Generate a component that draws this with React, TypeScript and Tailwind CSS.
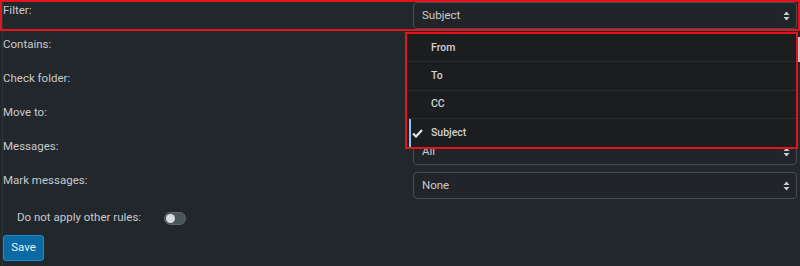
import React from "react"

function Updown() {
  return (
    <svg width="7" height="10" viewBox="0 0 7 10" className="text-[#c9ced1]">
      <path d="M3.5 0.5 L6.5 4 H0.5 Z" fill="currentColor" />
      <path d="M3.5 9.5 L6.5 6 H0.5 Z" fill="currentColor" />
    </svg>
  )
}

function Select({ value, hidden }: { value?: string; hidden?: boolean }) {
  return (
    <div className="w-[384px] h-[27px] rounded-[4px] border border-[#454d53] bg-[#212529] pl-[8px] pr-[6px] flex items-center justify-between text-[11.5px] text-[#c9ced1]">
      <span>{value}</span>
      {!hidden && <Updown />}
    </div>
  )
}

const rows = [
  { label: "Filter:", value: "Subject" },
  { label: "Contains:", value: "", input: true },
  { label: "Check folder:", value: "" },
  { label: "Move to:", value: "" },
  { label: "Messages:", value: "All" },
  { label: "Mark messages:", value: "None" },
]

const options = ["From", "To", "CC", "Subject"]

export default function App() {
  return (
    <div className="relative w-[800px] h-[266px] overflow-hidden bg-[#22272b] font-['Roboto',sans-serif] text-[#c6cbce]">
      <div className="ml-[2px] pt-[2px] border-l border-[#2c3237] h-full">
        {rows.map((r) => (
          <div key={r.label} className="flex h-[34px]">
            <div className="w-[410px] text-[11.5px] leading-4">{r.label}</div>
            <Select value={r.value} hidden={r.input} />
          </div>
        ))}

        {/* Toggle row */}
        <div className="flex items-center h-[24px] pl-[14px]">
          <span className="w-[147px] text-[11.5px]">Do not apply other rules:</span>
          <div className="w-[22px] h-[13px] rounded-full bg-[#4a555b] border border-[#5d686e] flex items-center pl-[1px]">
            <div className="w-[9px] h-[9px] rounded-full bg-[#d9dee1]" />
          </div>
        </div>

        <button className="mt-[5px] w-[41px] h-[26px] rounded-[3px] bg-[#0b6aa3] border border-[#2389c8] text-[11.5px] text-[#e8f0f5]">
          Save
        </button>
      </div>

      {/* Filter row highlight */}
      <div className="absolute left-0 top-0 w-[800px] h-[31px] border-2 border-[#e3151c] pointer-events-none" />

      {/* Scrollbar bits at right edge */}
      <div className="absolute left-[798px] top-[37px] w-[2px] h-[25px] bg-[#c8ccd0]" />

      {/* Open dropdown */}
      <div className="absolute left-[405px] top-[32px] w-[393px] h-[117px] border-2 border-[#e3151c] bg-[#1c1d1f]">
        <div className="flex flex-col h-full">
          {options.map((o, i) => (
            <div
              key={o}
              className={
                "relative flex items-center h-[28.25px] pl-[24px] text-[10.5px] font-medium text-[#d0d3d6] " +
                (i < options.length - 1 ? "border-b border-[#2a2d30]" : "")
              }
            >
              {o === "Subject" && (
                <>
                  <div className="absolute left-[2px] top-0 bottom-0 w-[2px] bg-[#8cc6ea]" />
                  <svg width="11" height="9" viewBox="0 0 11 9" className="absolute left-[5px] top-[10px]">
                    <path d="M1 4.5 L4 7.5 L10 1" fill="none" stroke="#e2e5e7" strokeWidth="2.2" />
                  </svg>
                </>
              )}
              {o}
            </div>
          ))}
        </div>
      </div>
    </div>
  )
}
